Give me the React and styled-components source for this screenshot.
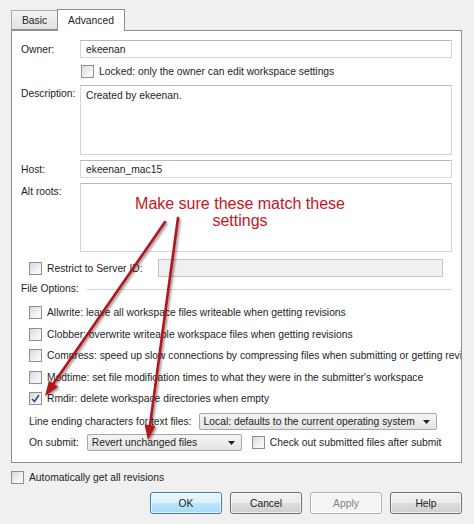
import React from "react";
import styled, { createGlobalStyle } from "styled-components";

const GlobalStyle = createGlobalStyle`
  html, body { margin: 0; padding: 0; background: #f0f0f0; }
  * { box-sizing: border-box; }
`;

const Dialog = styled.div`
  position: relative;
  width: 474px;
  height: 524px;
  background: #f0f0f0;
  font-family: "Liberation Sans", Arial, sans-serif;
  font-size: 10.3px;
  color: #1e1e1e;
  padding: 9px 12px 0 11px;
  overflow: hidden;
`;

const TabBar = styled.div`
  display: flex;
  align-items: flex-end;
  height: 21px;
  position: relative;
  z-index: 1;
`;

const Tab = styled.div`
  display: flex;
  align-items: center;
  justify-content: center;
  height: ${(p) => (p.active ? "22px" : "20px")};
  width: ${(p) => p.w}px;
  margin-left: ${(p) => (p.active ? "-1px" : "0")};
  margin-bottom: ${(p) => (p.active ? "-1px" : "0")};
  border: 1px solid ${(p) => (p.active ? "#8c8e94" : "#a9abb0")};
  border-bottom: ${(p) => (p.active ? "none" : "1px solid #8c8e94")};
  background: ${(p) =>
    p.active ? "#fff" : "linear-gradient(#f3f3f3, #e2e2e2)"};
  padding-bottom: ${(p) => (p.active ? "1px" : "0")};
`;

const Panel = styled.div`
  border: 1px solid #8c8e94;
  background: #fff;
  height: 433px;
  padding: 9px 9px 0 9px;
  display: flex;
  flex-direction: column;
  overflow: hidden;
`;

const FieldRow = styled.div`
  display: flex;
  align-items: ${(p) => (p.top ? "flex-start" : "center")};
  margin-top: ${(p) => p.mt || 0}px;
`;

const Label = styled.div`
  width: 59px;
  flex: none;
  padding-top: ${(p) => (p.top ? "3px" : "0")};
`;

const TextBox = styled.div`
  flex: 1;
  height: ${(p) => p.h || 18}px;
  border: 1px solid #d5d5d5;
  border-top-color: #b9b9b9;
  background: ${(p) => (p.disabled ? "#f0f0f0" : "#fff")};
  border-color: ${(p) => (p.disabled ? "#c6c6c6" : undefined)};
  padding: ${(p) => (p.multi ? "4px 5px" : "0 5px")};
  display: flex;
  align-items: ${(p) => (p.multi ? "flex-start" : "center")};
  margin-right: ${(p) => p.mr || 0}px;
`;

const CheckRow = styled.div`
  display: flex;
  align-items: center;
  height: ${(p) => p.h || 13}px;
  margin-top: ${(p) => p.mt || 0}px;
  margin-left: ${(p) => p.ml || 0}px;
  white-space: nowrap;
`;

const Box = styled.span`
  width: 13px;
  height: 13px;
  flex: none;
  border: 1px solid #8f8f8f;
  background: linear-gradient(135deg, #d8d8d8, #f6f6f6 70%);
  margin-right: 5px;
  display: flex;
  align-items: center;
  justify-content: center;
`;

const Check = ({ checked }) => (
  <Box>
    {checked && (
      <svg width="9" height="9" viewBox="0 0 9 9">
        <path d="M1 5 L3.5 7.5 L8 1" fill="none" stroke="#2b4f8f" strokeWidth="1.6" />
      </svg>
    )}
  </Box>
);

const GroupHeader = styled.div`
  display: flex;
  align-items: center;
  margin-top: 5px;
  height: 12px;
  gap: 8px;
  &::after {
    content: "";
    flex: 1;
    height: 1px;
    background: #d5d5d5;
    margin-top: 2px;
  }
`;

const SelectBox = styled.div`
  width: ${(p) => p.w}px;
  height: 17px;
  flex: none;
  border: 1px solid #a8a8a8;
  border-radius: 2px;
  background: linear-gradient(#f4f4f4, #e4e4e4);
  display: flex;
  align-items: center;
  justify-content: space-between;
  padding: 0 6px 0 4px;
  margin-right: ${(p) => p.mr || 0}px;
`;

const Select = ({ w, mr, children }) => (
  <SelectBox w={w} mr={mr}>
    <span>{children}</span>
    <svg width="7" height="4" viewBox="0 0 7 4">
      <path d="M0 0 H7 L3.5 4 Z" fill="#222" />
    </svg>
  </SelectBox>
);

const SelectRow = styled.div`
  display: flex;
  align-items: center;
  margin-left: 8px;
  margin-top: ${(p) => p.mt || 0}px;
  white-space: nowrap;
`;

const Gap = styled.span`
  width: ${(p) => p.w}px;
  flex: none;
`;

const ButtonRow = styled.div`
  display: flex;
  justify-content: flex-end;
  gap: 8px;
  margin-top: 8px;
`;

const Button = styled.div`
  width: 72px;
  height: 22px;
  border-radius: 3px;
  display: flex;
  align-items: center;
  justify-content: center;
  border: 1px solid ${(p) => (p.primary ? "#3c7fb1" : p.disabled ? "#adb2b5" : "#707070")};
  background: ${(p) =>
    p.disabled
      ? "#f4f4f4"
      : p.primary
      ? "linear-gradient(#eaf6fd 0%, #d9f0fc 50%, #bee6fd 51%, #a7d9f5 100%)"
      : "linear-gradient(#f2f2f2 0%, #ebebeb 50%, #dddddd 51%, #cfcfcf 100%)"};
  color: ${(p) => (p.disabled ? "#838383" : "#1e1e1e")};
  box-shadow: inset 0 0 0 1px rgba(255, 255, 255, 0.7);
`;

const Note = styled.div`
  position: absolute;
  left: 120px;
  top: 195px;
  width: 240px;
  text-align: center;
  font-family: "Liberation Sans", Arial, sans-serif;
  font-size: 16px;
  line-height: 17px;
  color: #c8141c;
`;

const Overlay = styled.svg`
  position: absolute;
  left: 0;
  top: 0;
  pointer-events: none;
`;

function arrow(x1, y1, tx, ty, len = 15, wid = 11) {
  const dx = tx - x1;
  const dy = ty - y1;
  const l = Math.hypot(dx, dy);
  const ux = dx / l;
  const uy = dy / l;
  const bx = tx - ux * len;
  const by = ty - uy * len;
  const nx = -uy * (wid / 2);
  const ny = ux * (wid / 2);
  return {
    line: `M${x1} ${y1} L${bx + ux * 2} ${by + uy * 2}`,
    head: `M${tx} ${ty} L${bx + nx} ${by + ny} L${bx - nx} ${by - ny} Z`,
  };
}

const arrows = [arrow(165, 222, 45, 396), arrow(178, 218, 148, 440)];

export default function App() {
  return (
    <Dialog>
      <GlobalStyle />
      <TabBar>
        <Tab w={47}>Basic</Tab>
        <Tab w={68} active>
          Advanced
        </Tab>
      </TabBar>
      <Panel>
        <FieldRow>
          <Label>Owner:</Label>
          <TextBox>ekeenan</TextBox>
        </FieldRow>
        <CheckRow mt={7} ml={60}>
          <Check />
          Locked: only the owner can edit workspace settings
        </CheckRow>
        <FieldRow top mt={7}>
          <Label top>Description:</Label>
          <TextBox multi h={70}>
            Created by ekeenan.
          </TextBox>
        </FieldRow>
        <FieldRow mt={5}>
          <Label>Host:</Label>
          <TextBox>ekeenan_mac15</TextBox>
        </FieldRow>
        <FieldRow top mt={5}>
          <Label top>Alt roots:</Label>
          <TextBox multi h={69} />
        </FieldRow>
        <FieldRow mt={7}>
          <CheckRow ml={8}>
            <Check />
            Restrict to Server ID:
          </CheckRow>
          <Gap w={15} />
          <TextBox disabled mr={9} />
        </FieldRow>
        <GroupHeader>File Options:</GroupHeader>
        <CheckRow mt={12} ml={8}>
          <Check />
          Allwrite: leave all workspace files writeable when getting revisions
        </CheckRow>
        <CheckRow mt={8.5} ml={8}>
          <Check />
          Clobber: overwrite writeable workspace files when getting revisions
        </CheckRow>
        <CheckRow mt={8.5} ml={8}>
          <Check />
          Compress: speed up slow connections by compressing files when submitting or getting revisions
        </CheckRow>
        <CheckRow mt={8.5} ml={8}>
          <Check />
          Modtime: set file modification times to what they were in the submitter's workspace
        </CheckRow>
        <CheckRow mt={8.5} ml={8}>
          <Check checked />
          Rmdir: delete workspace directories when empty
        </CheckRow>
        <SelectRow mt={8}>
          <span>Line ending characters for text files:</span>
          <Gap w={7} />
          <Select w={238}>Local: defaults to the current operating system</Select>
        </SelectRow>
        <SelectRow mt={4}>
          <span>On submit:</span>
          <Gap w={8} />
          <Select w={155} mr={10}>
            Revert unchanged files
          </Select>
          <Check />
          Check out submitted files after submit
        </SelectRow>
      </Panel>
      <CheckRow mt={8}>
        <Check />
        Automatically get all revisions
      </CheckRow>
      <ButtonRow>
        <Button primary>OK</Button>
        <Button>Cancel</Button>
        <Button disabled>Apply</Button>
        <Button>Help</Button>
      </ButtonRow>

      <Note>
        Make sure these match these
        <br />
        settings
      </Note>
      <Overlay width="474" height="524" viewBox="0 0 474 524">
        <defs>
          <filter id="sh" x="-20%" y="-20%" width="140%" height="140%">
            <feDropShadow dx="1.5" dy="1.5" stdDeviation="1.2" floodColor="#000" floodOpacity="0.45" />
          </filter>
        </defs>
        <g filter="url(#sh)">
          {arrows.map((a, i) => (
            <g key={i}>
              <path d={a.line} stroke="#b3121a" strokeWidth="2.6" fill="none" strokeLinecap="round" />
              <path d={a.head} fill="#b3121a" />
            </g>
          ))}
        </g>
      </Overlay>
    </Dialog>
  );
}
